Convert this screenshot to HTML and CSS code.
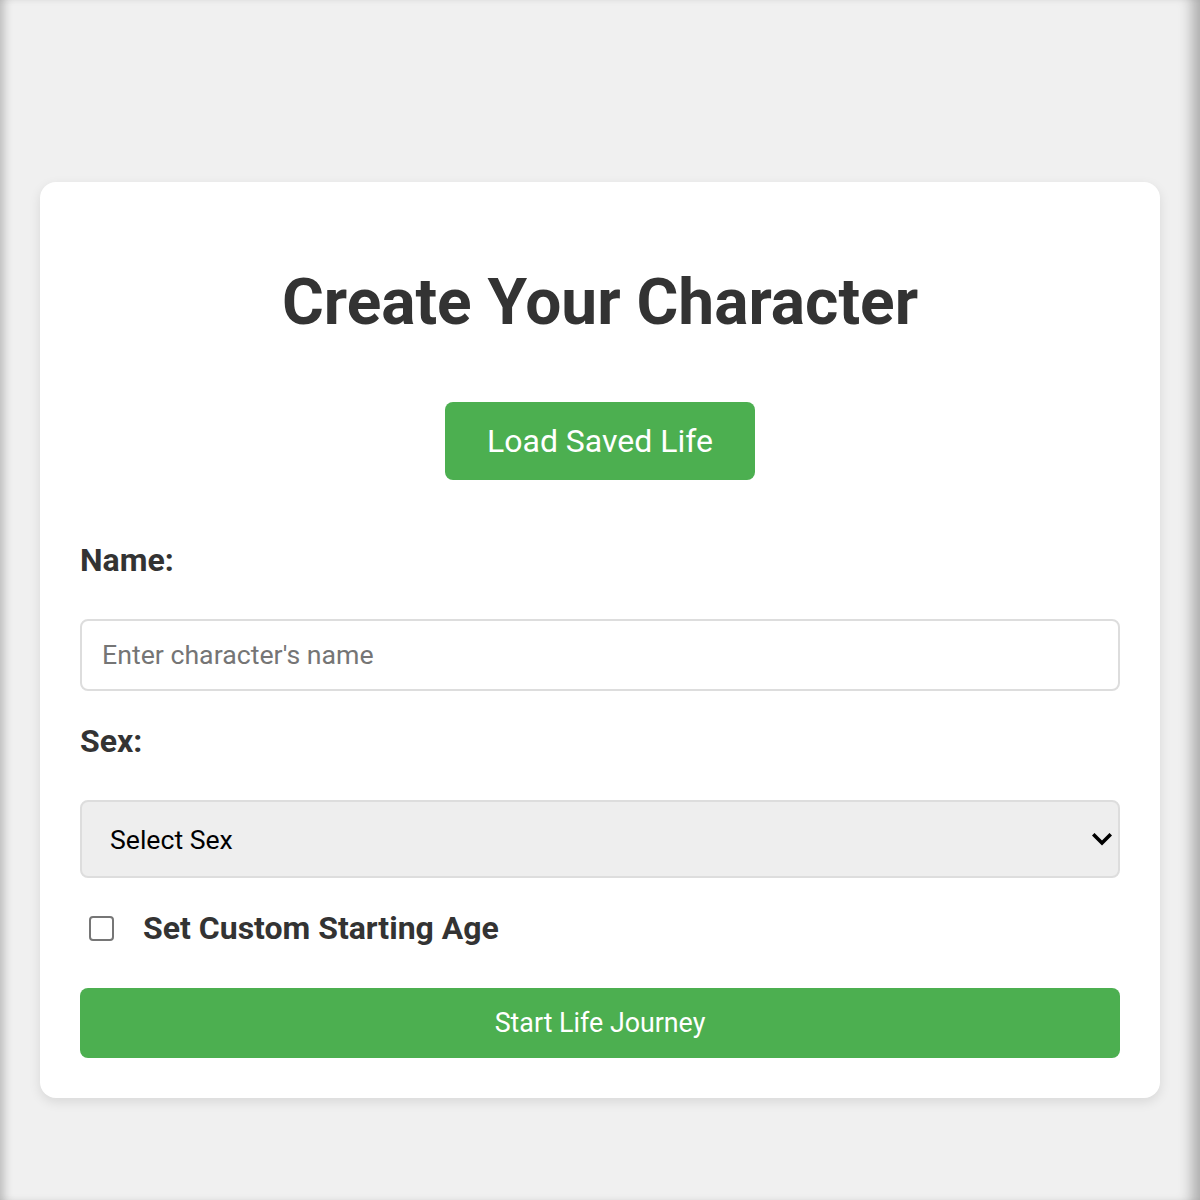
FILE: index.html
```html
<!DOCTYPE html>
<html lang="en">
<head>
  <meta charset="UTF-8">
  <title>Create Your Character</title>
  <link rel="stylesheet" href="styles.css">
</head>
<body>
  <div class="page">
    <div class="card">
      <h1>Create Your Character</h1>

      <div class="load-row">
        <button class="load-btn">Load Saved Life</button>
      </div>

      <div class="form-group">
        <label for="char-name">Name:</label>
        <input type="text" id="char-name" placeholder="Enter character's name">
      </div>

      <div class="form-group">
        <label for="char-sex">Sex:</label>
        <div class="select-wrap">
          <select id="char-sex">
            <option value="">Select Sex</option>
            <option value="male">Male</option>
            <option value="female">Female</option>
          </select>
          <svg class="select-arrow" width="20" height="13" viewBox="0 0 20 13">
            <polyline points="2.5,2.5 10,10 17.5,2.5" fill="none" stroke="#000" stroke-width="3.6" stroke-linecap="square"/>
          </svg>
        </div>
      </div>

      <div class="check-row">
        <input type="checkbox" id="custom-age">
        <label for="custom-age">Set Custom Starting Age</label>
      </div>

      <button class="start-btn">Start Life Journey</button>
    </div>
  </div>
</body>
</html>
```

FILE: styles.css
```css
* {
  margin: 0;
  padding: 0;
  box-sizing: border-box;
  font-family: Roboto, Arial, sans-serif;
}

body {
  background-color: #f0f0f0;
}

.page {
  min-height: 100vh;
  padding: 182px 40px 40px;
  box-shadow: inset 10px 0 10px -6px rgba(0, 0, 0, 0.22),
              inset -16px 0 14px -8px rgba(0, 0, 0, 0.28);
}

.card {
  background: white;
  border-radius: 16px;
  padding: 40px;
  box-shadow: 0 4px 12px rgba(0, 0, 0, 0.1);
}

h1 {
  font-size: 64px;
  font-weight: bold;
  color: #333;
  text-align: center;
  margin: 43px 0 62px;
}

.load-row {
  text-align: center;
  margin-bottom: 61px;
}

.load-btn {
  background-color: #4CAF50;
  color: white;
  border: none;
  border-radius: 8px;
  font-size: 32px;
  line-height: 38px;
  padding: 20px 42px;
  cursor: pointer;
}

.form-group {
  margin-bottom: 31px;
}

.form-group label {
  display: block;
  font-size: 32px;
  font-weight: bold;
  color: #333;
  margin-bottom: 40px;
}

.form-group input {
  width: 100%;
  height: 72px;
  font-size: 26.7px;
  padding: 0 20px;
  border: 2px solid #ddd;
  border-radius: 8px;
  color: #333;
}

.form-group input::placeholder {
  color: #757575;
}

.select-wrap {
  position: relative;
}

.select-wrap select {
  width: 100%;
  height: 78px;
  appearance: none;
  -webkit-appearance: none;
  font-size: 26.6px;
  padding: 0 28px;
  background-color: #eee;
  border: 2px solid #ddd;
  border-radius: 8px;
  color: #000;
}

.select-arrow {
  position: absolute;
  right: 8px;
  top: 33px;
  pointer-events: none;
}

.check-row {
  display: flex;
  align-items: center;
  gap: 29px;
  margin-bottom: 41px;
}

.check-row input {
  appearance: none;
  -webkit-appearance: none;
  width: 25px;
  height: 25px;
  margin-left: 9px;
  border: 2px solid #767676;
  border-radius: 4px;
  background: white;
}

.check-row label {
  font-size: 32px;
  font-weight: bold;
  color: #333;
}

.start-btn {
  display: block;
  width: 100%;
  height: 70px;
  background-color: #4CAF50;
  color: white;
  border: none;
  border-radius: 8px;
  font-size: 26.8px;
  cursor: pointer;
}
```
